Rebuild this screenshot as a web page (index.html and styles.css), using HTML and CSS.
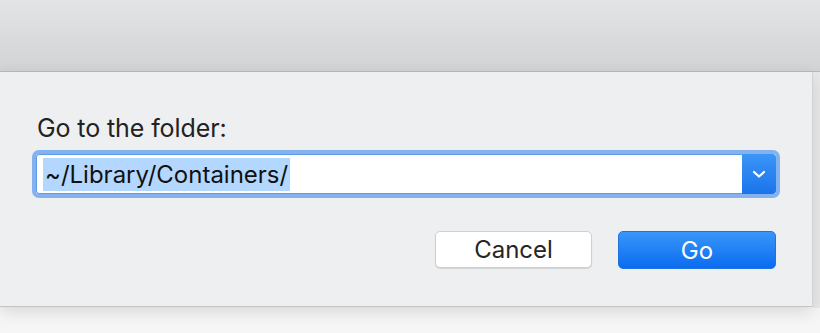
FILE: index.html
```html
<!DOCTYPE html>
<html>
<head>
<meta charset="utf-8">
<link rel="stylesheet" href="styles.css">
</head>
<body>
<div class="toolbar"></div>
<div class="stage">
  <div class="dialog">
    <div class="label">Go to the folder:</div>
    <div class="combo">
      <div class="field"><span class="sel">~/Library/Containers/</span></div>
      <div class="drop">
        <svg width="14" height="9" viewBox="0 0 14 9"><path d="M2 2 L7 6.5 L12 2" fill="none" stroke="#fff" stroke-width="2.2" stroke-linecap="round" stroke-linejoin="round"/></svg>
      </div>
    </div>
    <div class="actions">
      <button class="btn cancel">Cancel</button>
      <button class="btn go">Go</button>
    </div>
  </div>
  <div class="side"></div>
</div>
<div class="below"></div>
</body>
</html>
```
FILE: styles.css
```css
html, body {
  margin: 0;
  padding: 0;
  width: 820px;
  height: 333px;
  overflow: hidden;
  background: #f4f4f4;
  font-family: Inter, "Liberation Sans", sans-serif;
}
.toolbar {
  height: 71px;
  background: linear-gradient(#e3e4e5, #d2d3d4);
  border-bottom: 1px solid #b9babb;
}
.stage {
  display: flex;
  height: 236px;
}
.dialog {
  width: 813px;
  height: 235px;
  box-sizing: border-box;
  background: #eeeff0;
  border-right: 1px solid #d3d3d3;
  border-bottom: 1px solid #c4c4c4;
  box-shadow: 0 5px 16px rgba(0,0,0,0.12);
  padding: 42px 40px 0 32px;
  position: relative;
  z-index: 1;
}
.side {
  flex: 1;
  background: #e9e9ea;
}
.label {
  font-size: 25px;
  line-height: 28px;
  color: #222;
  padding-left: 5px;
  margin-bottom: 8px;
  letter-spacing: -0.1px;
}
.combo {
  display: flex;
  width: 748px;
  height: 48px;
  box-sizing: border-box;
  border: 4px solid #84b2ee;
  border-radius: 7px;
  background: #fff;
  overflow: hidden;
}
.field {
  flex: 1;
  display: flex;
  align-items: center;
  padding-left: 6px;
  border: 1px solid #5c9be8;
  border-right: none;
  border-radius: 3px 0 0 3px;
}
.sel {
  background: #b3d7ff;
  font-size: 24px;
  line-height: 33px;
  color: #111;
  padding: 0 2px 0 2px;
}
.drop {
  width: 34px;
  background: linear-gradient(#3c95f7, #1b74ea);
  display: flex;
  align-items: center;
  justify-content: center;
  border-radius: 0 3px 3px 0;
}
.actions {
  display: flex;
  justify-content: flex-end;
  gap: 26px;
  margin-top: 33px;
  width: 744px;
}
.btn {
  font-family: Inter, "Liberation Sans", sans-serif;
  font-size: 24px;
  height: 37px;
  border-radius: 5px;
  padding: 0;
}
.cancel {
  width: 157px;
  background: #fff;
  color: #262626;
  border: 1px solid #cfcfcf;
  box-shadow: 0 1px 1px rgba(0,0,0,0.12);
}
.go {
  width: 158px;
  height: 38px;
  background: linear-gradient(#3a96f8, #0a6cf0);
  color: #fff;
  border: 1px solid #1e73e0;
}
.below {
  height: 26px;
  background: #f6f6f6;
}
```
